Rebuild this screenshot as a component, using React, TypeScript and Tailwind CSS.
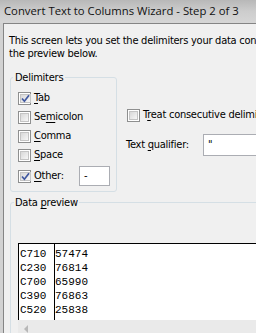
import React from 'react';

const Check = () => (
  <svg width="9" height="9" viewBox="0 0 9 9" className="block">
    <path d="M1 4.5 L3.4 7.2 L8 1.2" fill="none" stroke="#4058a0" strokeWidth="1.7" />
  </svg>
);

const CheckBox = ({ checked }: { checked?: boolean }) => (
  <span className="w-[13px] h-[13px] shrink-0 border border-[#8e8f8f] bg-white p-[1px] flex">
    <span className="flex-1 flex items-center justify-center bg-gradient-to-br from-[#d8d8d8] to-[#f7f7f7] border border-[#c4c4c4]">
      {checked && <Check />}
    </span>
  </span>
);

// label with one underlined access key
const Mnemonic = ({ pre = '', keyChar, post = '' }: { pre?: string; keyChar: string; post?: string }) => (
  <span>
    {pre}
    <span className="underline underline-offset-2">{keyChar}</span>
    {post}
  </span>
);

interface Delim {
  pre?: string;
  keyChar: string;
  post?: string;
  checked?: boolean;
}

const delimiters: Delim[] = [
  { keyChar: 'T', post: 'ab', checked: true },
  { pre: 'Se', keyChar: 'm', post: 'icolon' },
  { keyChar: 'C', post: 'omma' },
  { keyChar: 'S', post: 'pace' },
];

const rows = [
  ['C710', '57474'],
  ['C230', '76814'],
  ['C700', '65990'],
  ['C390', '76863'],
  ['C520', '25838'],
];

export default function App() {
  return (
    <div className="w-[256px] h-[333px] overflow-hidden flex flex-col bg-[#cbcbcb] text-black font-['DejaVu_Sans_Condensed','DejaVu_Sans',sans-serif] text-[11px] tracking-[-0.25px]">
      <div className="h-[23px] shrink-0 pl-[4px] flex items-center whitespace-nowrap bg-gradient-to-b from-[#b8b8b8] via-[#cdcdcd] to-[#d6d6d6] font-['Open_Sans',sans-serif] text-[11.3px] tracking-normal text-[#111]">
        Convert Text to Columns Wizard - Step 2 of 3
      </div>

      <div className="flex-1 flex min-h-0">
        <div className="w-[3px] shrink-0 bg-[#d2d2d2]" />
        <div className="w-[280px] shrink-0 border-l border-t border-[#858585] bg-[#f0f0f0] flex flex-col">
          <div className="pt-[10px] pl-[5px] leading-[13px] whitespace-nowrap">
            <div>This screen lets you set the delimiters your data contains. You can see how your text is affected in</div>
            <div>the preview below.</div>
          </div>

          <div className="flex mt-[17px]">
            {/* Delimiters group */}
            <div className="relative shrink-0 ml-[6px] w-[107px] h-[115px] border border-[#d5dfe5] rounded-[3px] pt-[11px] pl-[7px]">
              <span className="absolute left-[2px] -top-[7px] px-[2px] bg-[#f0f0f0] leading-[13px]">Delimiters</span>
              {delimiters.map((d) => (
                <div key={d.keyChar} className="h-[19px] flex items-center gap-[3px]">
                  <CheckBox checked={d.checked} />
                  <Mnemonic pre={d.pre} keyChar={d.keyChar} post={d.post} />
                </div>
              ))}
              <div className="h-[20px] mt-[1px] flex items-center gap-[3px]">
                <CheckBox checked />
                <span className="w-[42px]">
                  <Mnemonic keyChar="O" post="ther:" />
                </span>
                <div className="w-[31px] h-[20px] shrink-0 border border-[#abadb3] bg-white pl-[4px] flex items-center">-</div>
              </div>
            </div>

            {/* Right column */}
            <div className="ml-[10px] flex flex-col min-w-0">
              <div className="mt-[32px] h-[13px] flex items-center gap-[3px] whitespace-nowrap">
                <CheckBox />
                <Mnemonic pre="T" keyChar="r" post="eat consecutive delimiters as one" />
              </div>
              <div className="mt-[12px] -ml-[1px] flex items-center">
                <span className="w-[77px] shrink-0 whitespace-nowrap">
                  <Mnemonic pre="Text " keyChar="q" post="ualifier:" />
                </span>
                <div className="w-[90px] h-[22px] shrink-0 border border-[#abadb3] bg-white pl-[4px] flex items-center">"</div>
              </div>
            </div>
          </div>

          {/* Data preview group */}
          <div className="relative shrink-0 mt-[10px] ml-[6px] w-[280px] h-[160px] border border-[#d5dfe5] rounded-[3px] pt-[40px] pl-[7px]">
            <span className="absolute left-[3px] -top-[7px] px-[1px] bg-[#f0f0f0] leading-[13px]">
              <Mnemonic pre="Data " keyChar="p" post="review" />
            </span>
            <div className="border-t border-l border-black bg-white h-[77px] flex font-['Liberation_Mono',monospace] text-[11px] tracking-normal leading-[14px]">
              <div className="w-[35px] pl-[1px] pt-[3px]">
                {rows.map((r) => (
                  <div key={r[0]}>{r[0]}</div>
                ))}
              </div>
              <div className="border-l border-black flex-1 pt-[3px]">
                {rows.map((r) => (
                  <div key={r[0]}>{r[1]}</div>
                ))}
              </div>
            </div>
            <div className="h-[17px] bg-[#eaeaea] flex items-center pl-[5px]">
              <svg width="6" height="8" viewBox="0 0 6 8">
                <path d="M5 0 L1 4 L5 8 Z" fill="#b8b8b8" />
              </svg>
            </div>
          </div>
        </div>
      </div>
    </div>
  );
}
